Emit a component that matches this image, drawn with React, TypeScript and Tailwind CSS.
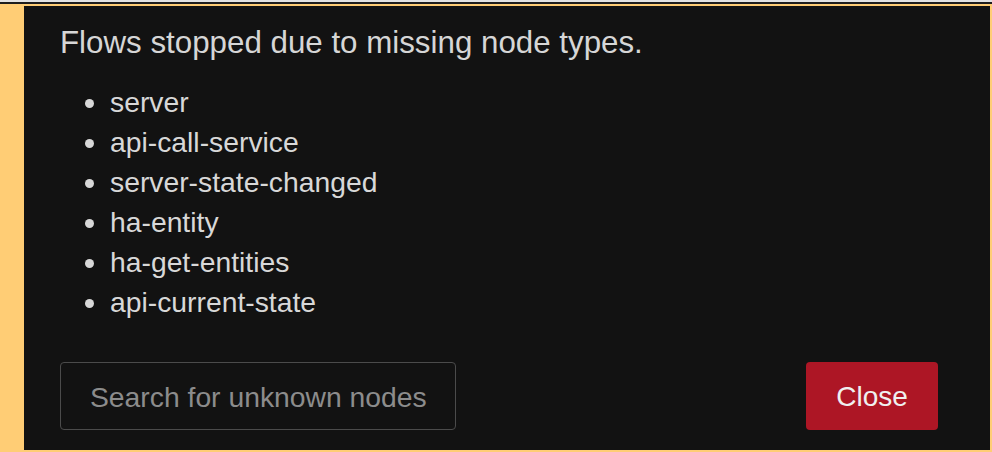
import React from 'react';

const missingTypes = [
  'server',
  'api-call-service',
  'server-state-changed',
  'ha-entity',
  'ha-get-entities',
  'api-current-state',
];

export default function App() {
  return (
    <div className="w-[992px] h-[452px] flex flex-col bg-[#121212] font-['Liberation_Sans',Arial,sans-serif]">
      <div className="h-[2px] bg-[#e2e2e2]" />
      <div className="h-[2px] bg-[#1d1d1d]" />
      <div className="flex-1 flex flex-col bg-[#121212] border-l-[24px] border-t-2 border-r-2 border-b-2 border-[#ffcd75] pl-[36px] pr-[52px] pt-[15px] pb-[20px]">
        <h1 className="text-[31.3px] leading-[43px] text-[#d6d6d6] mb-[18px]">
          Flows stopped due to missing node types.
        </h1>
        <ul className="flex flex-col">
          {missingTypes.map((t) => (
            <li key={t} className="flex items-center h-[40px] text-[28.3px] leading-[40px] text-[#d8d8d8]">
              <span className="ml-[25px] mr-[16px] mt-[2px] w-[9px] h-[9px] rounded-full bg-[#d8d8d8]" />
              {t}
            </li>
          ))}
        </ul>
        <div className="mt-auto flex items-center justify-between">
          <input
            type="text"
            placeholder="Search for unknown nodes"
            className="w-[396px] h-[68px] rounded-[4px] border border-[#4b4b4b] bg-transparent pl-[29px] pt-[2px] text-[28.3px] text-[#d8d8d8] placeholder:text-[#8c8c8c] outline-none"
          />
          <button className="w-[132px] h-[68px] rounded-[4px] bg-[#ad1625] pt-[2px] text-[28px] text-[#f0f0f0]">
            Close
          </button>
        </div>
      </div>
    </div>
  );
}
